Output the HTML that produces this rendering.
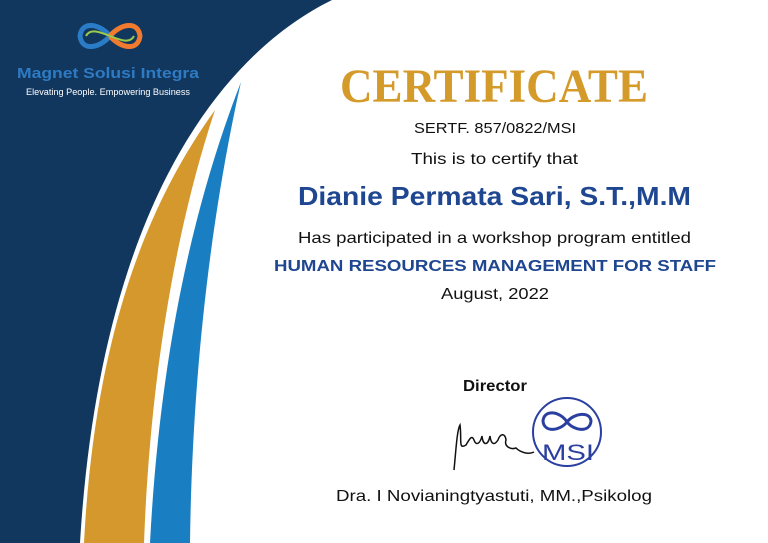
<!DOCTYPE html>
<html><head><meta charset="utf-8"><style>
html,body{margin:0;padding:0;background:#fff;}
svg{display:block}
</style></head><body>
<svg width="768" height="543" viewBox="0 0 768 543" xmlns="http://www.w3.org/2000/svg">
<rect width="768" height="543" fill="#fff"/>
<path d="M0,0 L332,0 C220,55 100,210 80,543 L0,543 Z" fill="#12375f"/>
<path d="M215,110 C150,200 95,330 84,543 L144,543 C150,380 175,230 215,110 Z" fill="#d4982c"/>
<path d="M241,82 C195,200 160,350 150,543 L190,543 C192,380 210,220 241,82 Z" fill="#1a7fc2"/>
<g fill="none" stroke-width="5">
<path d="M110,36 C100,24 82,20 80,36 C82,52 100,48 110,36" stroke="#2a7cc7"/>
<path d="M110,36 C120,24 138,20 140,36 C138,52 120,48 110,36" stroke="#f07a2d"/>
</g>
<path d="M86,36 C90,28 100,32 110,36 C120,40 130,44 134,36" fill="none" stroke="#9acb4a" stroke-width="2"/>
<g font-family="Liberation Sans, sans-serif">
<text x="17" y="78" textLength="182" lengthAdjust="spacingAndGlyphs" font-size="15" font-weight="bold" fill="#2e7bc4">Magnet Solusi Integra</text>
<text x="26" y="95" textLength="164" lengthAdjust="spacingAndGlyphs" font-size="9" fill="#fff">Elevating People. Empowering Business</text>
</g>
<text x="340" y="102" textLength="308" lengthAdjust="spacingAndGlyphs" font-family="Liberation Serif, serif" font-size="48" font-weight="bold" fill="#d49a2a">CERTIFICATE</text>
<g font-family="Liberation Sans, sans-serif" fill="#111">
<text x="414" y="133" textLength="162" lengthAdjust="spacingAndGlyphs" font-size="15">SERTF. 857/0822/MSI</text>
<text x="411" y="164" textLength="167" lengthAdjust="spacingAndGlyphs" font-size="16">This is to certify that</text>
<text x="298" y="205" textLength="393" lengthAdjust="spacingAndGlyphs" font-size="26" font-weight="bold" fill="#1f4690">Dianie Permata Sari, S.T.,M.M</text>
<text x="298" y="243" textLength="393" lengthAdjust="spacingAndGlyphs" font-size="16">Has participated in a workshop program entitled</text>
<text x="274" y="271" textLength="442" lengthAdjust="spacingAndGlyphs" font-size="16" font-weight="bold" fill="#1f4690">HUMAN RESOURCES MANAGEMENT FOR STAFF</text>
<text x="441" y="299" textLength="108" lengthAdjust="spacingAndGlyphs" font-size="16">August, 2022</text>
<text x="463" y="391" textLength="64" lengthAdjust="spacingAndGlyphs" font-size="16" font-weight="bold">Director</text>
<text x="336" y="501" textLength="316" lengthAdjust="spacingAndGlyphs" font-size="16">Dra.  I Novianingtyastuti, MM.,Psikolog</text>
</g>
<path d="M454,470 C456,450 457,430 460,425 C462,440 458,450 466,445 C470,438 472,435 474,440 C476,446 480,444 482,436 C483,446 488,446 490,436 C491,444 494,446 498,440 C500,434 505,432 506,440 C504,446 510,450 516,448 C520,452 528,455 534,452" fill="none" stroke="#111" stroke-width="1.5"/>
<circle cx="567" cy="432" r="34" fill="none" stroke="#2b3fa0" stroke-width="2"/>
<g fill="none" stroke="#2b3fa0" stroke-width="3">
<path d="M567,422 C560,411 544,409 543,421 C544,433 560,431 567,422 C574,413 590,411 591,421 C590,433 574,431 567,422"/>
</g>
<text x="542" y="460" textLength="52" lengthAdjust="spacingAndGlyphs" font-family="Liberation Sans, sans-serif" font-size="22" fill="#2b3fa0">MSI</text>
</svg>
</body></html>
